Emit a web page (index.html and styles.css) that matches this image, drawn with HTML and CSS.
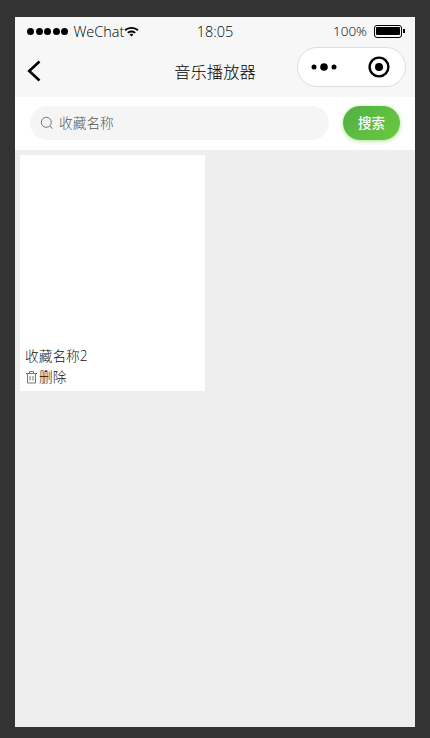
FILE: index.html
```html
<!DOCTYPE html>
<html lang="zh-CN">
<head>
<meta charset="utf-8">
<title>音乐播放器</title>
<link rel="stylesheet" href="styles.css">
</head>
<body>
<div class="phone">
  <div class="status">
    <div class="status-left">
      <span class="dots"><i></i><i></i><i></i><i></i><i></i></span>
      <span class="carrier">WeChat</span>
      <svg class="wifi" width="15" height="11" viewBox="0 0 15 11"><path d="M0.5 3.6C4.4 0 10.6 0 14.5 3.6L13.2 5C10 2.1 5 2.1 1.8 5Z" fill="#000"/><path d="M3.2 6.2C5.6 4 9.4 4 11.8 6.2L10.5 7.5C8.7 6 6.3 6 4.5 7.5Z" fill="#000"/><path d="M5.6 8.4C6.7 7.5 8.3 7.5 9.4 8.4L7.5 10.6Z" fill="#000"/></svg>
    </div>
    <div class="time">18:05</div>
    <div class="status-right">
      <span class="pct">100%</span>
      <span class="battery"><span class="battery-fill"></span></span>
      <span class="battery-cap"></span>
    </div>
  </div>
  <div class="nav">
    <svg class="back" width="14" height="22" viewBox="0 0 14 22"><path d="M12.5 1.5L2.2 11L12.5 20.5" fill="none" stroke="#000" stroke-width="2.6"/></svg>
    <div class="title">音乐播放器</div>
    <div class="capsule">
      <svg class="more" width="28" height="8" viewBox="0 0 28 8"><circle cx="3" cy="4" r="2.5"/><circle cx="13" cy="4" r="3.8"/><circle cx="23" cy="4" r="2.5"/></svg>
      <svg class="record" width="22" height="22" viewBox="0 0 22 22"><circle cx="11" cy="11" r="9.4" fill="none" stroke="#000" stroke-width="2.4"/><circle cx="11" cy="11" r="4" fill="#000"/></svg>
    </div>
  </div>
  <div class="search-bar">
    <div class="search-box">
      <svg class="search-icon" width="14" height="14" viewBox="0 0 14 14"><circle cx="6.3" cy="6.3" r="5" fill="none" stroke="#777" stroke-width="1"/><path d="M10 10L12.5 12.7" stroke="#777" stroke-width="1" fill="none"/></svg>
      <span class="placeholder">收藏名称</span>
    </div>
    <div class="search-btn">搜索</div>
  </div>
  <div class="content">
    <div class="card">
      <div class="cover"></div>
      <div class="name">收藏名称2</div>
      <div class="delete">
        <svg width="13" height="14" viewBox="0 0 13 14"><path d="M1 3.5H12M4.5 3.5V1.5H8.5V3.5M2.5 3.5V13H10.5V3.5M5 6V10.5M8 6V10.5" fill="none" stroke="#777" stroke-width="1"/></svg>
        <span>删除</span>
      </div>
    </div>
  </div>
</div>
</body>
</html>
```
FILE: styles.css
```css
* { box-sizing: border-box; }
html, body { margin: 0; padding: 0; height: 100%; }
body {
  width: 430px;
  height: 738px;
  overflow: hidden;
  background: #333;
  padding: 17px 15px 11px;
  font-family: "Open Sans", "Noto Sans CJK SC", sans-serif;
  font-weight: 300;
  color: #000;
}
.phone {
  width: 400px;
  height: 710px;
  background: #eee;
  display: flex;
  flex-direction: column;
}
.status {
  height: 28px;
  background: #f7f7f7;
  display: grid;
  grid-template-columns: 1fr auto 1fr;
  align-items: center;
  padding: 0 10px 0 12px;
  font-size: 14px;
  color: #000;
}
.status-left { display: flex; align-items: center; }
.dots { display: flex; gap: 1.6px; margin-right: 5px; }
.dots i { width: 7px; height: 7px; border-radius: 50%; background: #000; display: block; }
.carrier { font-size: 14.5px; }
.wifi { margin-left: 0; }
.time { font-size: 14.5px; padding-right: 2px; }
.status-right { display: flex; align-items: center; justify-content: flex-end; }
.pct { font-size: 13.5px; margin-right: 7px; }
.battery {
  width: 28px;
  height: 13px;
  border: 1.3px solid #000;
  border-radius: 3px;
  padding: 1.2px;
  display: flex;
}
.battery-fill { flex: 1; background: #000; border-radius: 1px; }
.battery-cap { width: 2px; height: 4px; background: #000; margin-left: 1px; }
.nav {
  height: 52px;
  background: #f7f7f7;
  display: grid;
  grid-template-columns: 1fr auto 1fr;
  align-items: center;
  padding: 0 9px 0 12px;
}
.back { justify-self: start; }
.title {
  font-size: 16.3px;
  color: #000;
  padding-right: 3px;
}
.capsule {
  justify-self: end;
  width: 109px;
  height: 40px;
  margin-bottom: 8px;
  border: 1px solid #ddd;
  border-radius: 20px;
  background: #fff;
  display: flex;
  align-items: center;
  padding-left: 13px;
}
.more { flex: none; }
.record { margin-left: 29px; flex: none; }
.search-bar {
  height: 53px;
  background: #fff;
  display: flex;
  align-items: center;
  padding: 0 15px 2px;
}
.search-box {
  width: 299px;
  height: 34px;
  border-radius: 17px;
  background: #f5f5f5;
  display: flex;
  align-items: center;
  padding-left: 10px;
  gap: 5px;
}
.placeholder { font-size: 13.7px; color: #555; padding-bottom: 2px; }
.search-btn {
  width: 57px;
  height: 34px;
  margin-left: 14px;
  padding-bottom: 2px;
  border-radius: 17px;
  background: linear-gradient(135deg, #4fb045, #6dc93f);
  box-shadow: 0 1px 4px rgba(110, 210, 70, .6);
  color: #fff;
  font-size: 13.5px;
  font-weight: 500;
  display: flex;
  align-items: center;
  justify-content: center;
}
.content {
  flex: 1;
  padding: 5px;
  background: #eee;
}
.card {
  width: 185px;
  height: 236px;
  background: #fff;
  display: flex;
  flex-direction: column;
  padding: 0 5px;
  font-size: 13.7px;
  color: #111;
}
.cover { flex: 1; }
.name { line-height: 20px; margin-bottom: 0; }
.delete { display: flex; align-items: center; gap: 1px; line-height: 20px; height: 21px; margin-bottom: 4px; }
```
